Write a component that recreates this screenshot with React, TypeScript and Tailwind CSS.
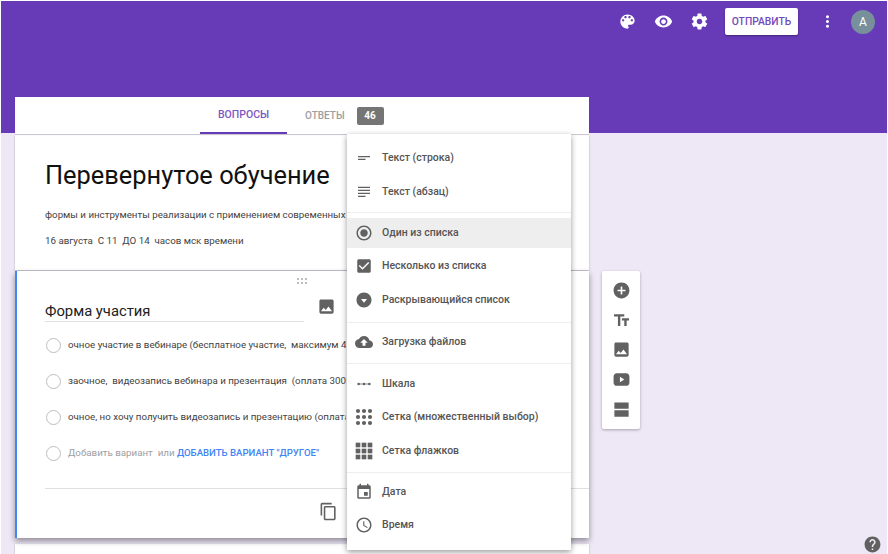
import type { ReactNode } from "react";

const font = "font-['Roboto',sans-serif]";

const paths = {
  palette:
    "M12 3c-4.97 0-9 4.03-9 9s4.03 9 9 9c.83 0 1.5-.67 1.5-1.5 0-.39-.15-.74-.39-1.01-.23-.26-.38-.61-.38-.99 0-.83.67-1.5 1.5-1.5H16c2.76 0 5-2.24 5-5 0-4.42-4.03-8-9-8zm-5.5 9c-.83 0-1.5-.67-1.5-1.5S5.67 9 6.5 9 8 9.67 8 10.5 7.33 12 6.5 12zm3-4C8.67 8 8 7.33 8 6.5S8.67 5 9.5 5s1.5.67 1.5 1.5S10.33 8 9.5 8zm5 0c-.83 0-1.5-.67-1.5-1.5S13.67 5 14.5 5s1.5.67 1.5 1.5S15.33 8 14.5 8zm3 4c-.83 0-1.5-.67-1.5-1.5S16.67 9 17.5 9s1.5.67 1.5 1.5-.67 1.5-1.5 1.5z",
  eye: "M12 4.5C7 4.5 2.73 7.61 1 12c1.73 4.39 6 7.5 11 7.5s9.27-3.11 11-7.5c-1.73-4.39-6-7.5-11-7.5zM12 17c-2.76 0-5-2.24-5-5s2.24-5 5-5 5 2.24 5 5-2.24 5-5 5zm0-8c-1.66 0-3 1.34-3 3s1.34 3 3 3 3-1.34 3-3-1.34-3-3-3z",
  gear: "M19.43 12.98c.04-.32.07-.64.07-.98s-.03-.66-.07-.98l2.11-1.65c.19-.15.24-.42.12-.64l-2-3.46c-.12-.22-.39-.3-.61-.22l-2.49 1c-.52-.4-1.08-.73-1.69-.98l-.38-2.65C14.46 2.18 14.25 2 14 2h-4c-.25 0-.46.18-.49.42l-.38 2.65c-.61.25-1.17.59-1.69.98l-2.49-1c-.23-.09-.49 0-.61.22l-2 3.46c-.13.22-.07.49.12.64l2.11 1.65c-.04.32-.07.65-.07.98s.03.66.07.98l-2.11 1.65c-.19.15-.24.42-.12.64l2 3.46c.12.22.39.3.61.22l2.49-1c.52.4 1.08.73 1.69.98l.38 2.65c.03.24.24.42.49.42h4c.25 0 .46-.18.49-.42l.38-2.65c.61-.25 1.17-.59 1.69-.98l2.49 1c.23.09.49 0 .61-.22l2-3.46c.12-.22.07-.49-.12-.64l-2.11-1.65zM12 15.5c-1.93 0-3.5-1.57-3.5-3.5s1.57-3.5 3.5-3.5 3.5 1.57 3.5 3.5-1.57 3.5-3.5 3.5z",
  more: "M12 8c1.1 0 2-.9 2-2s-.9-2-2-2-2 .9-2 2 .9 2 2 2zm0 2c-1.1 0-2 .9-2 2s.9 2 2 2 2-.9 2-2-.9-2-2-2zm0 6c-1.1 0-2 .9-2 2s.9 2 2 2 2-.9 2-2-.9-2-2-2z",
  image:
    "M21 19V5c0-1.1-.9-2-2-2H5c-1.1 0-2 .9-2 2v14c0 1.1.9 2 2 2h14c1.1 0 2-.9 2-2zM8.5 13.5l2.5 3.01L14.5 12l4.5 6H5l3.5-4.5z",
  copy: "M16 1H4c-1.1 0-2 .9-2 2v14h2V3h12V1zm3 4H8c-1.1 0-2 .9-2 2v14c0 1.1.9 2 2 2h11c1.1 0 2-.9 2-2V7c0-1.1-.9-2-2-2zm0 16H8V7h11v14z",
  short: "M4 9.4h16v1.5H4zm0 3.7h10v1.5H4z",
  subject: "M14 17H4v1.5h10V17zm6-8H4v1.5h16V9zM4 14.5h16V13H4v1.5zM4 5v1.5h16V5H4z",
  radio:
    "M12 7c-2.76 0-5 2.24-5 5s2.24 5 5 5 5-2.24 5-5-2.24-5-5-5zm0-5C6.48 2 2 6.48 2 12s4.48 10 10 10 10-4.48 10-10S17.52 2 12 2zm0 18c-4.42 0-8-3.58-8-8s3.58-8 8-8 8 3.58 8 8-3.58 8-8 8z",
  check:
    "M19 3H5c-1.11 0-2 .9-2 2v14c0 1.1.89 2 2 2h14c1.11 0 2-.9 2-2V5c0-1.1-.89-2-2-2zm-9 14l-5-5 1.41-1.41L10 14.17l7.59-7.59L19 8l-9 9z",
  dropdown:
    "M12 2C6.48 2 2 6.48 2 12s4.48 10 10 10 10-4.48 10-10S17.52 2 12 2zm0 13.5L8 10.5h8z",
  upload:
    "M19.35 10.04C18.67 6.59 15.64 4 12 4 9.11 4 6.6 5.64 5.35 8.04 2.34 8.36 0 10.91 0 14c0 3.31 2.69 6 6 6h13c2.76 0 5-2.24 5-5 0-2.64-2.05-4.78-4.65-4.96zM14 13v4h-4v-4H7l5-5 5 5h-3z",
  date: "M17 12h-5v5h5v-5zM16 1v2H8V1H6v2H5c-1.11 0-1.99.9-1.99 2L3 19c0 1.1.89 2 2 2h14c1.1 0 2-.9 2-2V5c0-1.1-.9-2-2-2h-1V1h-2zm3 18H5V8h14v11z",
  time: "M11.99 2C6.47 2 2 6.48 2 12s4.47 10 9.99 10C17.52 22 22 17.52 22 12S17.52 2 11.99 2zM12 20c-4.42 0-8-3.58-8-8s3.58-8 8-8 8 3.58 8 8-3.58 8-8 8zm.5-13H11v6l5.25 3.15.75-1.23-4.5-2.67z",
  add: "M12 2C6.48 2 2 6.48 2 12s4.48 10 10 10 10-4.48 10-10S17.52 2 12 2zm5 11h-4v4h-2v-4H7v-2h4V7h2v4h4v2z",
  title: "M2.5 4v3h5v12h3V7h5V4h-13zm19 5h-9v3h3v7h3v-7h3V9z",
  video:
    "M18 4H6C3.8 4 2 5.8 2 8v8c0 2.2 1.8 4 4 4h12c2.2 0 4-1.8 4-4V8c0-2.2-1.8-4-4-4zM10 15.5v-7l5.5 3.5-5.5 3.5z",
  section: "M3 3h18v8H3zM3 13h18v8H3z",
  help: "M12 2C6.48 2 2 6.48 2 12s4.48 10 10 10 10-4.48 10-10S17.52 2 12 2zm1 17h-2v-2h2v2zm2.07-7.75l-.9.92C13.45 12.9 13 13.5 13 15h-2v-.5c0-1.1.45-2.1 1.17-2.83l1.24-1.26c.37-.36.59-.86.59-1.41 0-1.1-.9-2-2-2s-2 .9-2 2H8c0-2.21 1.79-4 4-4s4 1.79 4 4c0 .88-.36 1.68-.93 2.25z",
};

function Icon({ d, className }: { d: string; className: string }) {
  return (
    <svg viewBox="0 0 24 24" fill="currentColor" fillRule="evenodd" className={className}>
      <path d={d} />
    </svg>
  );
}

function ScaleIcon() {
  return (
    <svg viewBox="0 0 24 24" fill="currentColor" className="size-[18px]">
      <rect x="3" y="11.5" width="18" height="1" />
      <circle cx="5" cy="12" r="1.6" />
      <circle cx="12" cy="12" r="1.6" />
      <circle cx="19" cy="12" r="1.6" />
    </svg>
  );
}

const gridCells = [4, 12, 20];

function DotGridIcon() {
  return (
    <svg viewBox="0 0 24 24" fill="currentColor" className="size-[18px]">
      {gridCells.map((y) =>
        gridCells.map((x) => <circle key={`${x}-${y}`} cx={x} cy={y} r="2.8" />)
      )}
    </svg>
  );
}

function SquareGridIcon() {
  return (
    <svg viewBox="0 0 24 24" fill="currentColor" className="size-[18px]">
      {gridCells.map((y) =>
        gridCells.map((x) => (
          <rect key={`${x}-${y}`} x={x - 3.1} y={y - 3.1} width="6.2" height="6.2" />
        ))
      )}
    </svg>
  );
}

type MenuItem = { label: string; icon: ReactNode; active?: boolean };

const big = "size-[18px]";

const menuGroups: { className: string; items: MenuItem[] }[] = [
  {
    className: "pt-[9px] pb-[5px]",
    items: [
      { label: "Текст (строка)", icon: <Icon d={paths.short} className={big} /> },
      { label: "Текст (абзац)", icon: <Icon d={paths.subject} className={big} /> },
    ],
  },
  {
    className: "pt-[5px] pb-[7px]",
    items: [
      { label: "Один из списка", icon: <Icon d={paths.radio} className={big} />, active: true },
      { label: "Несколько из списка", icon: <Icon d={paths.check} className={big} /> },
      { label: "Раскрывающийся список", icon: <Icon d={paths.dropdown} className={big} /> },
    ],
  },
  {
    className: "pt-[4px] pb-[6px]",
    items: [{ label: "Загрузка файлов", icon: <Icon d={paths.upload} className={big} /> }],
  },
  {
    className: "pt-[5px] pb-[6px]",
    items: [
      { label: "Шкала", icon: <ScaleIcon /> },
      { label: "Сетка (множественный выбор)", icon: <DotGridIcon /> },
      { label: "Сетка флажков", icon: <SquareGridIcon /> },
    ],
  },
  {
    className: "pt-[4px] pb-[10px]",
    items: [
      { label: "Дата", icon: <Icon d={paths.date} className={big} /> },
      { label: "Время", icon: <Icon d={paths.time} className={big} /> },
    ],
  },
];

const options = [
  "очное участие в вебинаре (бесплатное участие,  максимум 40 человек)",
  "заочное,  видеозапись вебинара и презентация  (оплата 300 рублей)",
  "очное, но хочу получить видеозапись и презентацию (оплата 300 рублей)",
];

const tools = [paths.add, paths.title, paths.image, paths.video, paths.section];

function Radio() {
  return <span className="size-[15px] shrink-0 rounded-full border-[1.5px] border-[#bdbdbd]" />;
}

export default function App() {
  return (
    <div
      className={`${font} relative h-[554px] w-[888px] overflow-hidden border-x border-t border-white bg-[#ede7f6] text-[#212121]`}
    >
      <header className="flex h-[132px] items-start justify-end bg-[#673ab7] pt-[7px] pr-[12px] text-white">
        <div className="flex h-[27px] items-center">
          <Icon d={paths.palette} className="size-[19px]" />
          <Icon d={paths.eye} className="ml-[17px] size-[19px]" />
          <Icon d={paths.gear} className="ml-[17px] size-[19px]" />
          <button className="ml-[16px] flex h-[27px] w-[73px] items-center justify-center rounded-[2px] bg-white text-[10.3px] font-medium text-[#7349bd] shadow-[0_1px_2px_rgba(0,0,0,0.35)]">
            ОТПРАВИТЬ
          </button>
          <Icon d={paths.more} className="ml-[20px] size-[19px]" />
          <div className="ml-[14px] flex size-[24px] items-center justify-center rounded-full bg-[#78909c] text-[12px]">
            A
          </div>
        </div>
      </header>

      <div className="-mt-[36px] flex items-start pl-[14px]">
        <main className="w-[574px] shrink-0">
          <div className="relative flex h-[37px] items-center bg-white shadow-[0_1px_1px_rgba(0,0,0,0.12)]">
            <div className="ml-[185px] flex h-full w-[87px] items-center justify-center border-b-[2px] border-[#673ab7] text-[10.5px] font-medium text-[#7e57c2]">
              ВОПРОСЫ
            </div>
            <span className="ml-[18px] text-[10px] font-medium text-[#9e9e9e]">ОТВЕТЫ</span>
            <span className="ml-[12px] flex h-[18px] w-[27px] items-center justify-center rounded-[2px] bg-[#757575] text-[10px] font-bold text-white">
              46
            </span>
          </div>

          <section className="mt-[1px] h-[135px] bg-white pt-[22px] pl-[30px] shadow-[0_1px_2px_rgba(0,0,0,0.25)]">
            <h1 className="whitespace-nowrap text-[25.4px] leading-[36px] font-normal text-[#111]">
              Перевернутое обучение
            </h1>
            <p className="mt-[15px] w-[301px] overflow-hidden whitespace-nowrap text-[9.75px] leading-[14px] text-[#424242]">
              формы и инструменты реализации с применением современных технологий
            </p>
            <p className="mt-[12px] whitespace-pre text-[9.75px] leading-[14px] text-[#424242]">
              16 августа  С 11  ДО 14  часов мск времени
            </p>
          </section>

          <section className="relative mt-[1px] h-[267px] border-l-[2px] border-[#4285f4] bg-white pl-[28px] shadow-[0_3px_6px_rgba(0,0,0,0.4)]">
            <div className="-ml-[30px] flex justify-center pt-[7px]">
              <div className="grid grid-cols-3 gap-[2px]">
                {[0, 1, 2, 3, 4, 5].map((n) => (
                  <span key={n} className="size-[2px] bg-[#bdbdbd]" />
                ))}
              </div>
            </div>
            <div className="mt-[14px] flex items-start">
              <div className="w-[259px] border-b border-[#e0e0e0] pt-[4px] pb-[1px] text-[14.8px] leading-[18px] text-[#212121]">
                Форма участия
              </div>
              <Icon d={paths.image} className="mt-[-1px] ml-[13px] size-[19px] text-[#616161]" />
            </div>
            <div className="mt-[16px] flex flex-col gap-[21px]">
              {options.map((o) => (
                <div key={o} className="flex h-[15px] items-center gap-[7px] pl-[1px]">
                  <Radio />
                  <span className="w-[278px] overflow-hidden whitespace-pre text-[9.75px] text-[#424242]">
                    {o}
                  </span>
                </div>
              ))}
              <div className="flex h-[15px] items-center gap-[7px] pl-[1px]">
                <Radio />
                <span className="whitespace-pre text-[9.75px] text-[#9e9e9e]">Добавить вариант  или </span>
                <span className="-ml-[7px] text-[9.6px] font-medium text-[#4285f4]">
                  ДОБАВИТЬ ВАРИАНТ "ДРУГОЕ"
                </span>
              </div>
            </div>
            <div className="mt-[27px] border-t border-[#e0e0e0]" />
            <Icon d={paths.copy} className="mt-[13px] ml-[274px] size-[19px] text-[#616161]" />
          </section>

          <section className="mt-[6px] h-[40px] bg-white shadow-[0_1px_2px_rgba(0,0,0,0.25)]" />
        </main>

        <aside className="mt-[174px] ml-[13px] flex h-[158px] w-[38px] flex-col items-center gap-[10.7px] rounded-[2px] bg-white pt-[10px] text-[#616161] shadow-[0_1px_3px_rgba(0,0,0,0.3)]">
          {tools.map((d) => (
            <Icon key={d} d={d} className="size-[19px]" />
          ))}
        </aside>
      </div>

      <div className="absolute top-[133px] left-[346px] w-[224px] bg-white text-[#616161] shadow-[0_2px_6px_rgba(0,0,0,0.4)]">
        {menuGroups.map((group, i) => (
          <div
            key={i}
            className={`${group.className} flex flex-col gap-[3.5px] ${i < menuGroups.length - 1 ? "border-b border-[#eeeeee]" : ""}`}
          >
            {group.items.map((item) => (
              <div
                key={item.label}
                className={`flex h-[30px] items-center gap-[8px] pl-[7px] ${item.active ? "bg-[#eeeeee]" : ""}`}
              >
                <span className="flex w-[20px] shrink-0 justify-center">{item.icon}</span>
                <span className="text-[10.5px] font-medium whitespace-nowrap text-[#555]">
                  {item.label}
                </span>
              </div>
            ))}
          </div>
        ))}
      </div>

      <Icon d={paths.help} className="absolute top-[534px] left-[862px] size-[19px] text-[#616161]" />
    </div>
  );
}
